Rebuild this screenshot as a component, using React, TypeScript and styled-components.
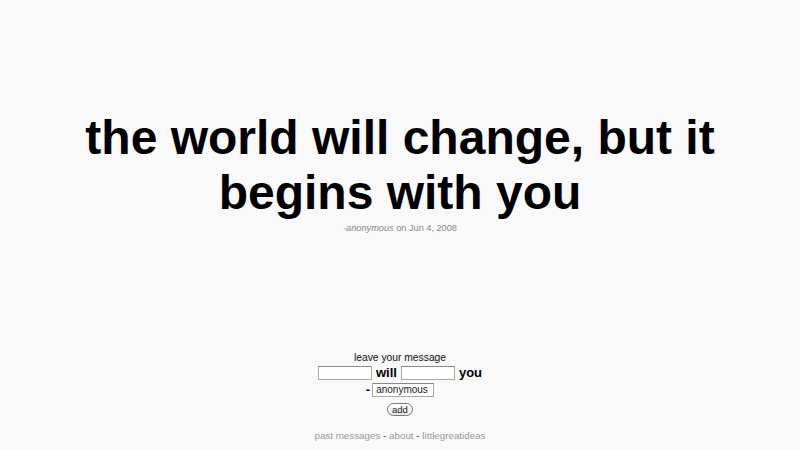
import React from 'react';
import styled, { createGlobalStyle } from 'styled-components';

const GlobalStyle = createGlobalStyle`
    html, body {
        margin: 0;
        padding: 0;
        background-color: #f9f9f9;
        font-family: "Liberation Sans", Arial, Helvetica, sans-serif;
    }
`;

const Page = styled.div`
    display: flex;
    flex-flow: column;
    align-items: center;
    width: 800px;
    height: 450px;
    overflow: hidden;
    color: #000;
`;
const Quote = styled.h1`
    margin: 110px 0 0;
    width: 680px;
    font-size: 48px;
    line-height: 55px;
    font-weight: bold;
    text-align: center;
`;
const Byline = styled.div`
    margin-top: 3px;
    font-size: 9.2px;
    color: #888;
    em {
        font-style: italic;
    }
`;
const Form = styled.form`
    display: flex;
    flex-flow: column;
    align-items: center;
    margin-top: 118px;
`;
const Label = styled.div`
    font-size: 10.3px;
    line-height: 13px;
    color: #111;
`;
const Row = styled.div<{ $gap: number }>`
    display: flex;
    align-items: center;
    gap: ${p => p.$gap}px;
    height: 17px;
`;
const Word = styled.span`
    font-size: 13px;
    font-weight: bold;
`;
const Field = styled.input<{ $w: number }>`
    box-sizing: border-box;
    width: ${p => p.$w}px;
    height: 14px;
    padding: 0 3px;
    border: 1px solid #a8a8a8;
    border-top-color: #8a8a8a;
    background: #fff;
    font-family: inherit;
    font-size: 10px;
    color: #222;
    outline: none;
`;
const Button = styled.button`
    margin-top: 5px;
    box-sizing: border-box;
    width: 26px;
    height: 13px;
    padding: 0;
    border: 1px solid #777;
    border-radius: 7px;
    background: linear-gradient(#fff, #e6e6e6);
    font-family: inherit;
    font-size: 9.5px;
    line-height: 11px;
    color: #222;
`;
const Footer = styled.div`
    margin-top: 14px;
    font-size: 9.8px;
    color: #333;
    a {
        color: #999;
        text-decoration: none;
    }
`;

const App: React.FC = () => {
    return (
        <Page>
            <GlobalStyle />
            <Quote>the world will change, but it begins with you</Quote>
            <Byline>
                <em>-anonymous</em> on Jun 4, 2008
            </Byline>
            <Form onSubmit={e => e.preventDefault()}>
                <Label>leave your message</Label>
                <Row $gap={4}>
                    <Field $w={54} />
                    <Word>will</Word>
                    <Field $w={54} />
                    <Word>you</Word>
                </Row>
                <Row $gap={2}>
                    <Word>-</Word>
                    <Field $w={62} defaultValue="anonymous" />
                </Row>
                <Button type="submit">add</Button>
            </Form>
            <Footer>
                <a href="#">past messages</a> - <a href="#">about</a> -{' '}
                <a href="#">littlegreatideas</a>
            </Footer>
        </Page>
    );
};

export default App;
